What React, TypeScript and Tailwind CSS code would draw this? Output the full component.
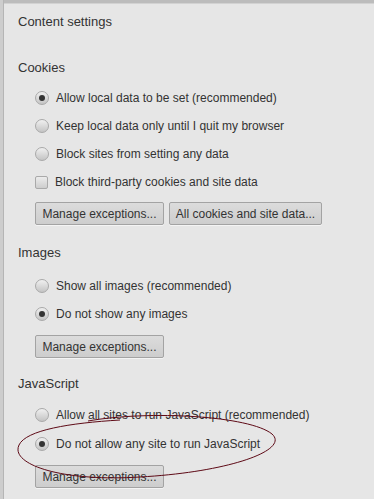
import React from "react";

const font = { fontFamily: '"Liberation Sans", Arial, sans-serif' };

function Radio({ checked, label }: { checked?: boolean; label: string }) {
  return (
    <div className="flex items-center h-[28px]">
      <span className="w-[14px] h-[14px] rounded-full border border-[#a9a9a9] bg-gradient-to-b from-[#f0f0f0] to-[#c4c4c4] flex items-center justify-center shrink-0">
        {checked && <span className="w-[6px] h-[6px] rounded-full bg-[#333]" />}
      </span>
      <span className="ml-[7px] text-[12px] text-[#333]">{label}</span>
    </div>
  );
}

function Check({ label }: { label: string }) {
  return (
    <div className="flex items-center h-[28px]">
      <span className="w-[13px] h-[13px] rounded-[2px] border border-[#a9a9a9] bg-gradient-to-b from-[#ececec] to-[#cdcdcd] shrink-0" />
      <span className="ml-[7px] text-[12px] text-[#333]">{label}</span>
    </div>
  );
}

function Btn({ label, w }: { label: string; w: string }) {
  return (
    <div className={`${w} h-[23px] rounded-[2px] border border-[#a3a3a3] bg-gradient-to-b from-[#dcdcdc] to-[#cdcdcd] flex items-center justify-center text-[12px] text-[#333] shadow-[0_1px_0_#f4f4f4]`}>
      {label}
    </div>
  );
}

export default function App() {
  return (
    <div className="relative w-[374px] h-[499px] bg-[#e6e6e6] overflow-hidden flex" style={font}>
      <div className="w-[4px] h-full bg-[#cdcdcd] border-r border-[#b5b5b5] shrink-0" />
      <div className="flex-1 flex flex-col">
        <div className="h-[4px] bg-[#bcbcbc] border-b border-[#d2d2d2]" />
        <div className="pl-[14px] pt-[9px]">
          <div className="text-[13px] text-[#333] h-[18px] leading-[18px]">Content settings</div>
          <div className="mt-[28px] text-[13px] text-[#333] h-[18px] leading-[18px]">Cookies</div>
          <div className="pl-[17px] mt-[7px]">
            <Radio checked label="Allow local data to be set (recommended)" />
            <Radio label="Keep local data only until I quit my browser" />
            <Radio label="Block sites from setting any data" />
            <Check label="Block third-party cookies and site data" />
            <div className="flex gap-[5px] mt-[6px]">
              <Btn w="w-[129px]" label="Manage exceptions..." />
              <Btn w="w-[153px]" label="All cookies and site data..." />
            </div>
          </div>
          <div className="mt-[19px] text-[13px] text-[#333] h-[18px] leading-[18px]">Images</div>
          <div className="pl-[17px] mt-[10px]">
            <Radio label="Show all images (recommended)" />
            <Radio checked label="Do not show any images" />
            <div className="flex mt-[7px]">
              <Btn w="w-[129px]" label="Manage exceptions..." />
            </div>
          </div>
          <div className="mt-[17px] text-[13px] text-[#333] h-[18px] leading-[18px]">JavaScript</div>
          <div className="pl-[17px] mt-[8px]">
            <Radio label="Allow all sites to run JavaScript (recommended)" />
            <div className="h-[1px]" />
            <Radio checked label="Do not allow any site to run JavaScript" />
            <div className="flex mt-[7px]">
              <Btn w="w-[129px]" label="Manage exceptions..." />
            </div>
          </div>
        </div>
      </div>
      <svg className="absolute left-0 top-0 pointer-events-none" width="374" height="499">
        <path
          d="M 88 421 C 150 410 250 416 272 434 C 290 450 230 472 140 477 C 60 482 10 464 19 445 C 26 430 70 423 120 420"
          fill="none"
          stroke="#5e0a16"
          strokeWidth="1"
        />
      </svg>
    </div>
  );
}
